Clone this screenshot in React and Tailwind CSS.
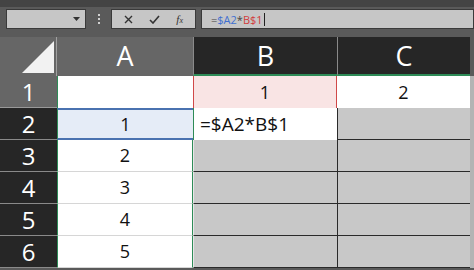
export default function App() {
  const rows = [2, 3, 4, 5, 6];
  return (
    <div className="w-[474px] h-[270px] overflow-hidden bg-[#5a5a5a] flex flex-col" style={{ fontFamily: "'Open Sans', 'Liberation Sans', sans-serif" }}>
      {/* top strip */}
      <div className="h-[7px] bg-[#444444]" />
      {/* toolbar */}
      <div className="h-[30px] flex items-start pt-[2px] pl-[6px]">
        <div className="w-[80px] h-[20px] bg-[#c6c6c6] border border-[#3a3a3a] flex items-center justify-end pr-[5px]">
          <svg width="7" height="4" viewBox="0 0 7 4"><path d="M0 0h7L3.5 4z" fill="#333" /></svg>
        </div>
        <div className="w-[25px] h-[20px] flex flex-col items-center justify-center gap-[2px]">
          <span className="w-[2px] h-[2px] bg-[#d0d0d0]" />
          <span className="w-[2px] h-[2px] bg-[#d0d0d0]" />
          <span className="w-[2px] h-[2px] bg-[#d0d0d0]" />
        </div>
        <div className="w-[85px] h-[20px] bg-[#c6c6c6] border border-[#3a3a3a] flex items-center justify-around px-[4px]">
          <svg width="9" height="9" viewBox="0 0 9 9"><path d="M1 1l7 7M8 1l-7 7" stroke="#333" strokeWidth="1.4" /></svg>
          <svg width="11" height="9" viewBox="0 0 11 9"><path d="M1 5l3 3 6-7" stroke="#333" strokeWidth="1.6" fill="none" /></svg>
          <span className="text-[11px] italic text-[#333] leading-none" style={{ fontFamily: "'Liberation Serif', serif" }}>f<span className="text-[8px]">x</span></span>
        </div>
        <div className="ml-[5px] flex-1 h-[20px] bg-[#c6c6c6] border border-[#3a3a3a] flex items-center pl-[9px] text-[11px] leading-none">
          <span className="text-[#444]">=</span>
          <span className="text-[#3f6fd1]">$A2</span>
          <span className="text-[#444]">*</span>
          <span className="text-[#d23c3c]">B$1</span>
          <span className="w-px h-[13px] bg-[#222] ml-px" />
        </div>
      </div>
      {/* grid */}
      <div className="grid grid-cols-[57px_136px_144px_133px_4px] grid-rows-[39px_32px_32px_32px_32px_32px_32px] text-[#111]">
        {/* header row */}
        <div className="bg-[#666666] border-r border-[#a0a0a0] relative">
          <svg className="absolute left-[22px] top-[4px]" width="32" height="32" viewBox="0 0 32 32"><path d="M32 0V32H0z" fill="#f2f2f2" /></svg>
        </div>
        <div className="bg-[#666666] text-white text-[27px] flex items-center justify-center leading-none border-b-2 border-[#666]">A</div>
        <div className="bg-[#262626] text-white text-[27px] flex items-center justify-center leading-none border-l border-[#8a8a8a] border-b-2 border-b-[#2e8b57]">B</div>
        <div className="bg-[#262626] text-white text-[27px] flex items-center justify-center leading-none border-l border-[#8a8a8a] border-b-2 border-b-[#2e8b57]">C</div>
        <div className="bg-[#5a5a5a]" />

        {/* row 1 */}
        <div className="bg-[#666666] text-white text-[24px] flex items-center justify-center leading-[28px] border-b border-[#999]">1</div>
        <div className="bg-white border-l border-[#2e8b57]" />
        <div className="bg-[#f9e4e4] border-x border-[#d04848] flex items-center justify-center text-[18px]">1</div>
        <div className="bg-white flex items-center justify-center text-[18px]">2</div>
        <div className="bg-[#b4b4b4]" />

        {rows.map((r, i) => (
          <Row key={r} n={r} i={i} />
        ))}
      </div>
    </div>
  );
}

function Row({ n, i }) {
  const first = i === 0;
  return (
    <>
      <div className="bg-[#262626] text-white text-[24px] flex items-center justify-center leading-[28px] border-b border-[#8a8a8a]">{n}</div>
      {first ? (
        <div className="bg-[#e5ecf7] border-l border-[#2e8b57] border-y-2 border-y-[#4a72b0] flex items-center justify-center text-[18px]">1</div>
      ) : (
        <div className="bg-white border-l border-[#2e8b57] border-r border-r-[#2e8b57] border-b border-b-[#d6d6d6] flex items-center justify-center text-[18px]">{n - 1}</div>
      )}
      {first ? (
        <div className="bg-white border-l border-[#2e8b57] flex items-center pl-[6px] text-[19px]">=$A2*B$1</div>
      ) : (
        <div className="bg-[#c8c8c8] border-b border-[#2a2a2a] border-l border-l-[#e8e8e8]" />
      )}
      <div className="bg-[#c8c8c8] border-l border-[#2a2a2a] border-b border-b-[#2a2a2a]" />
      <div className="bg-[#b4b4b4]" />
    </>
  );
}
